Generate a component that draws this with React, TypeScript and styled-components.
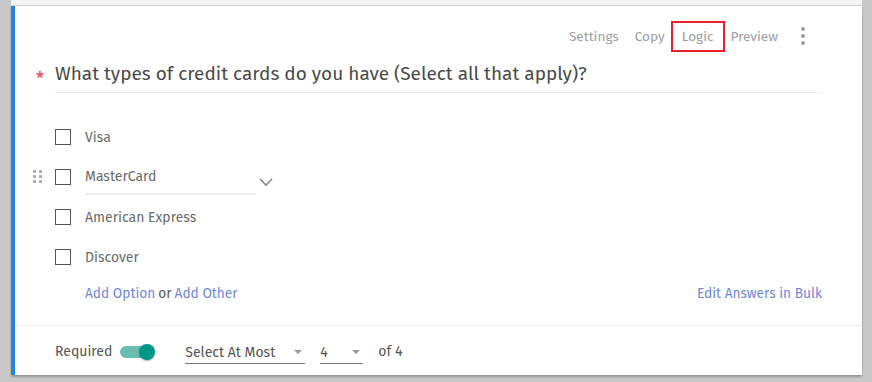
import React from "react";
import styled, { createGlobalStyle } from "styled-components";

const Global = createGlobalStyle`
  html, body { margin: 0; padding: 0; }
  body { background: #c8c8c8; font-family: "Fira Sans", "Noto Sans", sans-serif; }
`;

const Page = styled.div`
  width: 872px;
  height: 382px;
  background: #c8c8c8;
  padding: 0 10px 0 11px;
  box-sizing: border-box;
  overflow: hidden;
`;

const TopStrip = styled.div`
  height: 5px;
  background: #f4f4f4;
  border-bottom: 1px solid #d0d0d0;
`;

const Card = styled.div`
  background: #fff;
  border-left: 4px solid #1a87e4;
  height: 369px;
  box-shadow: 0 2px 2px rgba(0,0,0,0.25);
  display: flex;
  flex-direction: column;
`;

const Body = styled.div`
  padding: 0 40px 0 40px;
  flex: 1;
`;

const Toolbar = styled.div`
  display: flex;
  justify-content: flex-end;
  align-items: center;
  height: 47px;
  padding-top: 13px;
  box-sizing: border-box;
`;

const ToolBtn = styled.span<{ $boxed?: boolean }>`
  font-size: 13.6px;
  color: #9e9e9e;
  padding: 0 ${(p) => (p.$boxed ? "9px" : "6px")};
  margin: 0 ${(p) => (p.$boxed ? "-2px" : "0")};
  height: 31px;
  line-height: 27px;
  box-sizing: border-box;
  border: 2px solid ${(p) => (p.$boxed ? "#e8202a" : "transparent")};
`;

const Kebab = styled.span`
  display: flex;
  flex-direction: column;
  gap: 3px;
  margin: 0 17px 0 15px;
  span {
    width: 4px; height: 4px; border-radius: 50%; background: #9e9e9e;
  }
`;

const QuestionRow = styled.div`
  display: flex;
  align-items: center;
  position: relative;
  height: 30px;
  margin-top: 9px;
`;

const Asterisk = styled.span`
  position: absolute;
  left: -19px;
  top: 6px;
  color: #f0353e;
  font-size: 18px;
`;

const QuestionText = styled.div`
  font-size: 19px;
  color: #4a4a4a;
  flex: 1;
  border-bottom: 1px solid #e8e8e8;
  height: 30px;
  line-height: 24px;
`;

const Options = styled.div`
  margin-top: 25px;
  display: flex;
  flex-direction: column;
`;

const OptionRow = styled.div`
  display: flex;
  align-items: center;
  height: 40px;
  position: relative;
`;

const Handle = styled.div`
  position: absolute;
  left: -22px;
  top: 13px;
  display: grid;
  grid-template-columns: 3px 3px;
  gap: 2px 3px;
  span { width: 3px; height: 3px; background: #aaa; border-radius: 1px; }
`;

const Box = styled.span`
  width: 14px;
  height: 14px;
  border: 1.5px solid #555;
  box-sizing: content-box;
  margin-right: 15px;
  flex: none;
`;

const Label = styled.span<{ $edit?: boolean }>`
  font-size: 14px;
  color: #6b6b6b;
  margin-left: -1px;
  ${(p) => p.$edit ? `
    width: 170px;
    border-bottom: 2px solid #ececec;
    padding-bottom: 8px;
    margin-top: 8px;
  ` : ""}
`;

const Chevron = styled.svg`
  margin-left: 3px;
  margin-top: 10px;
`;

const LinksRow = styled.div`
  display: flex;
  justify-content: space-between;
  padding-left: 30px;
  font-size: 13.7px;
  height: 34px;
  align-items: center;
  margin-top: -1px;
`;

const Link = styled.span`
  color: #7088e0;
`;

const Or = styled.span`
  color: #555;
  margin: 0 3px;
`;

const Footer = styled.div`
  border-top: 1px solid #efefef;
  height: 50px;
  display: flex;
  align-items: center;
  padding-left: 40px;
  padding-top: 2px;
  box-sizing: border-box;
  font-size: 14px;
  color: #555;
`;

const Switch = styled.span`
  position: relative;
  width: 30px;
  height: 12px;
  border-radius: 6px;
  background: #6bbcb1;
  margin: 0 35px 0 8px;
  span {
    position: absolute;
    right: -5px;
    top: -2px;
    width: 16px;
    height: 16px;
    border-radius: 50%;
    background: #00968a;
    box-shadow: 0 1px 2px rgba(0,0,0,0.3);
  }
`;

const Select = styled.span<{ $w: number }>`
  width: ${(p) => p.$w}px;
  display: flex;
  justify-content: space-between;
  align-items: center;
  border-bottom: 1px solid #777;
  height: 22px;
  margin-right: 15px;
  color: #555;
  margin-top: 2px;
`;

const Caret = styled.span`
  width: 0; height: 0;
  border-left: 4px solid transparent;
  border-right: 4px solid transparent;
  border-top: 4px solid #999;
  margin-right: 3px;
`;

export default function App() {
  const opts = ["Visa", "MasterCard", "American Express", "Discover"];
  return (
    <Page>
      <Global />
      <TopStrip />
      <Card>
        <Body>
          <Toolbar>
            <ToolBtn>Settings</ToolBtn>
            <ToolBtn>Copy</ToolBtn>
            <ToolBtn $boxed>Logic</ToolBtn>
            <ToolBtn>Preview</ToolBtn>
            <Kebab><span /><span /><span /></Kebab>
          </Toolbar>
          <QuestionRow>
            <Asterisk>*</Asterisk>
            <QuestionText>What types of credit cards do you have (Select all that apply)?</QuestionText>
          </QuestionRow>
          <Options>
            {opts.map((o, i) => (
              <OptionRow key={o}>
                {i === 1 && (
                  <Handle>
                    <span /><span /><span /><span /><span /><span />
                  </Handle>
                )}
                <Box />
                <Label $edit={i === 1}>{o}</Label>
                {i === 1 && (
                  <Chevron width="16" height="10" viewBox="0 0 16 10">
                    <path d="M2 2 L8 8 L14 2" fill="none" stroke="#888" strokeWidth="1.6" />
                  </Chevron>
                )}
              </OptionRow>
            ))}
          </Options>
          <LinksRow>
            <span>
              <Link>Add Option</Link>
              <Or>or</Or>
              <Link>Add Other</Link>
            </span>
            <Link>Edit Answers in Bulk</Link>
          </LinksRow>
        </Body>
        <Footer>
          Required
          <Switch><span /></Switch>
          <Select $w={120}>Select At Most<Caret /></Select>
          <Select $w={43}>4<Caret /></Select>
          of 4
        </Footer>
      </Card>
    </Page>
  );
}
